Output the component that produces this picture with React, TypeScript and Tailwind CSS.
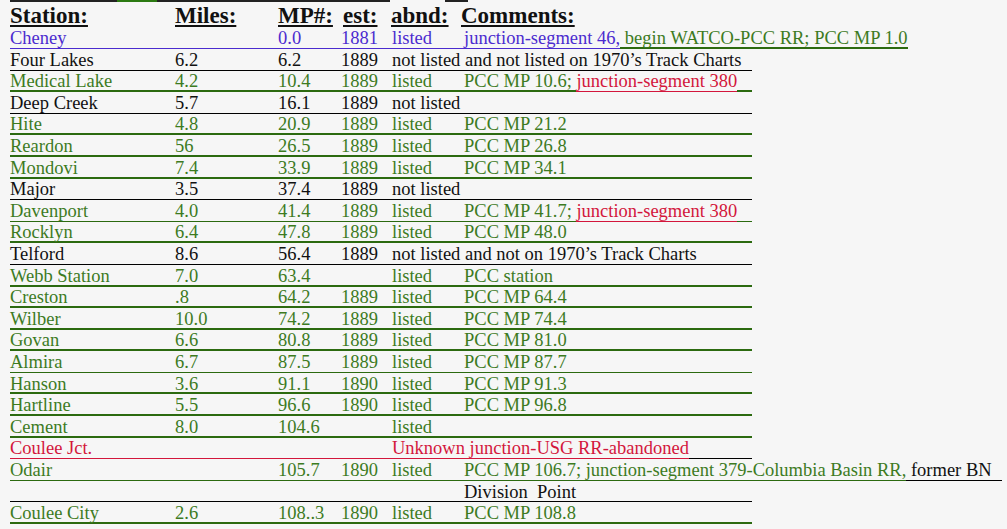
import React from "react";

type Tone = "g" | "g1" | "k" | "p" | "r";

type Seg = { t?: string; w?: string; tone: Tone };

type Row = { segs: Seg[]; fill: Tone };

const toneCls: Record<Tone, string> = {
  g: "text-[#3d7b1f] border-b-2 border-[#2c6a10]",
  g1: "text-[#3d7b1f] border-b border-[#2c6a10]",
  k: "text-[#111111] border-b border-black",
  p: "text-[#4b2bcf] border-b border-[#4b2bcf]",
  r: "text-[#d3163c] border-b border-[#d3163c]",
};

const W = ["w-[165px]", "w-[103px]", "w-[63px]", "w-[51px]", "w-[72px]"];

// station, miles, mp, est (and abnd when given) in their fixed columns
const base = (tone: Tone, cols: string[]): Seg[] =>
  cols.map((t, i) => ({ t, w: W[i], tone }));

const std = (tone: Tone, cols: string[], comment: Seg[] = []): Row => ({
  segs: [...base(tone, cols), ...comment],
  fill: tone,
});

const pcc = (name: string, miles: string, mp: string, est: string, c: string, tone: Tone = "g") =>
  std(tone, [name, miles, mp, est, "listed"], c ? [{ t: c, tone }] : []);

const rows: Row[] = [
  std("p", ["Cheney", "", "0.0", "1881", "listed"], [
    { t: "junction-segment 46,", tone: "p" },
    { t: " begin WATCO-PCC RR; PCC MP 1.0", tone: "g" },
  ]),
  std("k", ["Four Lakes", "6.2", "6.2", "1889"], [
    { t: "not listed and not listed on 1970’s Track Charts", tone: "k" },
  ]),
  std("g", ["Medical Lake", "4.2", "10.4", "1889", "listed"], [
    { t: "PCC MP 10.6; ", tone: "g" },
    { t: "junction-segment 380", tone: "r" },
  ]),
  std("k", ["Deep Creek", "5.7", "16.1", "1889"], [{ t: "not listed", tone: "k" }]),
  pcc("Hite", "4.8", "20.9", "1889", "PCC MP 21.2"),
  pcc("Reardon", "56", "26.5", "1889", "PCC MP 26.8"),
  pcc("Mondovi", "7.4", "33.9", "1889", "PCC MP 34.1"),
  std("k", ["Major", "3.5", "37.4", "1889"], [{ t: "not listed", tone: "k" }]),
  std("g1", ["Davenport", "4.0", "41.4", "1889", "listed"], [
    { t: "PCC MP 41.7; ", tone: "g1" },
    { t: "junction-segment 380", tone: "r" },
  ]),
  pcc("Rocklyn", "6.4", "47.8", "1889", "PCC MP 48.0"),
  std("k", ["Telford", "8.6", "56.4", "1889"], [
    { t: "not listed and not on 1970’s Track Charts", tone: "k" },
  ]),
  pcc("Webb Station", "7.0", "63.4", "", "PCC station"),
  pcc("Creston", ".8", "64.2", "1889", "PCC MP 64.4"),
  pcc("Wilber", "10.0", "74.2", "1889", "PCC MP 74.4"),
  pcc("Govan", "6.6", "80.8", "1889", "PCC MP 81.0"),
  pcc("Almira", "6.7", "87.5", "1889", "PCC MP 87.7", "g1"),
  pcc("Hanson", "3.6", "91.1", "1890", "PCC MP 91.3"),
  pcc("Hartline", "5.5", "96.6", "1890", "PCC MP 96.8"),
  pcc("Cement", "8.0", "104.6", "", ""),
  {
    segs: [
      ...base("r", ["Coulee Jct.", "", "", ""]),
      { t: "Unknown junction-USG RR-abandoned", tone: "r" },
    ],
    fill: "k",
  },
  std("g1", ["Odair", "", "105.7", "1890", "listed"], [
    { t: "PCC MP 106.7; junction-segment 379-Columbia Basin RR,", tone: "g1" },
    { t: " former BN", tone: "k" },
    { t: "", w: "w-[10px]", tone: "k" },
  ]),
  std("k", ["", "", "", "", ""], [{ t: "Division  Point", tone: "k" }]),
  pcc("Coulee City", "2.6", "108..3", "1890", "PCC MP 108.8"),
];

const headers = [
  { t: "Station:", w: "w-[165px]" },
  { t: "Miles:", w: "w-[103px]" },
  { t: "MP#:", w: "w-[65px]" },
  { t: "est:", w: "w-[48px]" },
  { t: "abnd:", w: "w-[70px]" },
  { t: "Comments:", w: "" },
];

export default function App() {
  return (
    <div className="min-h-screen w-full overflow-hidden bg-[#f6f6f6] pl-[10px] font-[family-name:Liberation_Serif,serif]">
      {/* cut-off underline of the line above */}
      <div className="flex h-[2px]">
        <div className="w-[107px] bg-[#222]" />
        <div className="w-[40px] bg-[#2c7a12]" />
        <div className="w-[233px] bg-[#222]" />
        <div className="w-[55px]" />
        <div className="w-[23px] bg-[#222]" />
      </div>

      {/* header */}
      <div className="flex h-[25.4px] pt-[2px] text-[23px] leading-[24px] font-bold text-[#111]">
        {headers.map((h) => (
          <div key={h.t} className={`${h.w} shrink-0 whitespace-nowrap`}>
            <span className="underline decoration-[1.5px] underline-offset-[2px]">{h.t}</span>
          </div>
        ))}
      </div>

      {/* rows */}
      {rows.map((row, i) => (
        <div key={i} className="flex w-max min-w-[742px] h-[21.6px] text-[18.5px] leading-[21.6px]">
          {row.segs.map((s, j) => (
            <div
              key={j}
              className={`${s.w ?? ""} ${toneCls[s.tone]} shrink-0 whitespace-pre pt-[0.7px]`}
            >
              {s.t}
            </div>
          ))}
          <div className={`flex-1 ${toneCls[row.fill]}`} />
        </div>
      ))}
    </div>
  );
}
